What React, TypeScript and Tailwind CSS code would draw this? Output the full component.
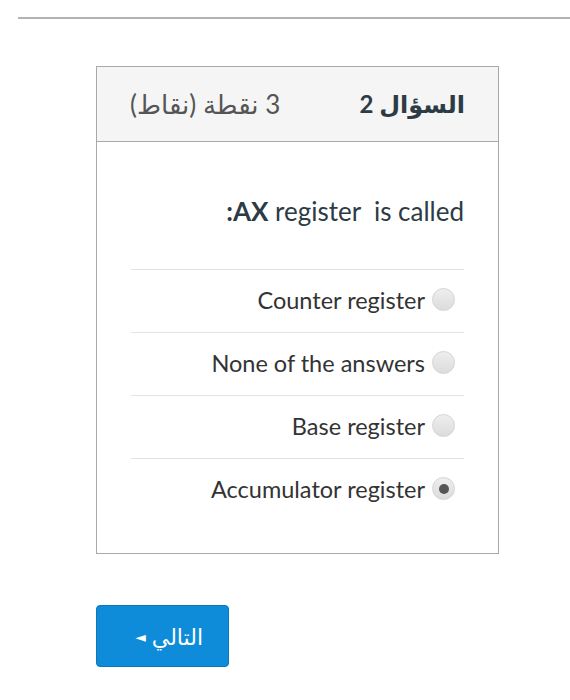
import React from 'react';

const options = [
  { label: 'Counter register', checked: false },
  { label: 'None of the answers', checked: false },
  { label: 'Base register', checked: false },
  { label: 'Accumulator register', checked: true },
];

function Radio({ checked }: { checked: boolean }) {
  return (
    <span className="flex h-[23px] w-[23px] shrink-0 items-center justify-center rounded-full border border-[#d4d4d4] bg-gradient-to-b from-[#eeeeee] to-[#dcdcdc]">
      {checked && <span className="h-[10px] w-[10px] rounded-full bg-[#555]" />}
    </span>
  );
}

export default function App() {
  return (
    <div dir="rtl" className="min-h-[700px] w-[570px] bg-white font-['Lato','DejaVu_Sans',sans-serif] text-[#2d3b45]">
      {/* Top rule */}
      <div className="pt-[17px]">
        <div className="h-[2px] w-[552px] bg-[#b3b3b3]" />
      </div>

      {/* Question card */}
      <div className="mt-[47px] ml-[96px] mr-[71px] border border-[#a9a9a9]">
        <div className="flex h-[75px] items-center justify-between border-b border-[#a9a9a9] bg-[#f5f5f5] px-[33px]">
          <span className="text-[24px] font-bold text-[#2d3b45]">السؤال 2</span>
          <span className="text-[26px] text-[#555]">3 نقطة (نقاط)</span>
        </div>

        <div className="px-[34px] pt-[52px] pb-[32px]">
          <p className="mb-[41px] text-[26px] leading-[34px]">
            <span dir="ltr">
              <bdi>
                <span className="font-bold">:AX</span> register&nbsp; is called
              </bdi>
            </span>
          </p>

          <div>
            {options.map((o) => (
              <div
                key={o.label}
                className="flex h-[63px] items-center gap-[7px] border-t border-[#e2e2e2] pr-[9px] pb-[3px]"
              >
                <Radio checked={o.checked} />
                <span className="text-[23.5px] leading-[28px] text-[#333]">{o.label}</span>
              </div>
            ))}
          </div>
        </div>
      </div>

      {/* Next button */}
      <div className="mt-[51px] flex justify-end pl-[96px]">
        <button className="flex h-[62px] w-[133px] items-center justify-start gap-[6px] rounded-[4px] border border-[#0a78bb] bg-[#0e8bd9] pr-[25px] text-[22px] text-white">
          <span>التالي</span>
          <span className="text-[14px]">◄</span>
        </button>
      </div>
    </div>
  );
}
